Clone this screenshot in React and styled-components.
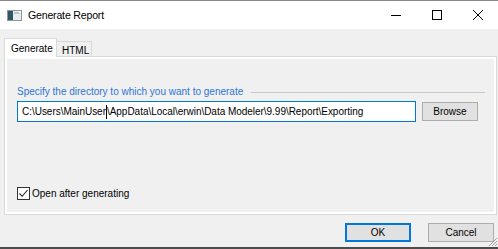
import React from 'react';
import styled, { createGlobalStyle } from 'styled-components';

const GlobalStyle = createGlobalStyle`
    html, body {
        margin: 0;
        padding: 0;
        background: #f0f0f0;
    }
    * {
        box-sizing: border-box;
    }
`;

const Window = styled.div`
    width: 498px;
    height: 249px;
    display: flex;
    flex-direction: column;
    position: relative;
    background: #f0f0f0;
    border-top: 1px solid #8a8a8a;
    border-bottom: 2px solid #4c4c4c;
    font-family: 'Liberation Sans', Arial, sans-serif;
    font-size: 10px;
    color: #000;
    overflow: hidden;
`;

const TitleBar = styled.div`
    height: 28px;
    flex: none;
    display: flex;
    align-items: center;
    background: #fff;
    padding-left: 7px;
`;

const TitleText = styled.span`
    margin-left: 6px;
    font-size: 10.5px;
    letter-spacing: -0.15px;
    flex: 1;
`;

const CaptionButton = styled.div`
    width: 41px;
    height: 28px;
    display: flex;
    align-items: center;
    justify-content: center;
`;

const Body = styled.div`
    flex: 1;
    display: flex;
    flex-direction: column;
    padding: 9px 1px 0 4px;
`;

const TabStrip = styled.div`
    display: flex;
    align-items: flex-end;
    height: 19px;
    position: relative;
    z-index: 1;
    margin-bottom: -1px;
`;

const Tab = styled.div`
    height: ${(p) => (p.$active ? '19px' : '16px')};
    padding: ${(p) => (p.$active ? '3px 6px 0 6px' : '2px 5px 0 5px')};
    width: ${(p) => (p.$active ? '53px' : '35px')};
    background: ${(p) => (p.$active ? '#fff' : '#f0f0f0')};
    border: 1px solid #d9d9d9;
    border-bottom: ${(p) => (p.$active ? 'none' : '1px solid #d9d9d9')};
    border-left: ${(p) => (p.$active ? '1px solid #d9d9d9' : 'none')};
    line-height: 13px;
    white-space: nowrap;
`;

const TabPanel = styled.div`
    height: 159px;
    border: 1px solid #d9d9d9;
    background: #fff;
    padding: 2px;
`;

const TabPage = styled.div`
    height: 100%;
    background: #f0f0f0;
    display: flex;
    flex-direction: column;
    padding: 26px 9px 12px 10px;
`;

const GroupHeader = styled.div`
    display: flex;
    align-items: center;
    color: #2e75d6;
    line-height: 13px;
    height: 13px;
    white-space: nowrap;
`;

const GroupLine = styled.div`
    flex: 1;
    height: 1px;
    background: #c8c8c8;
    margin-left: 8px;
    margin-top: 1px;
`;

const PathRow = styled.div`
    display: flex;
    align-items: center;
    margin-top: 3px;
    gap: 6px;
`;

const PathField = styled.div`
    width: 399px;
    height: 21px;
    background: #fff;
    border: 1px solid #0078d7;
    padding-left: 4px;
    display: flex;
    align-items: center;
    white-space: nowrap;
    overflow: hidden;
    letter-spacing: -0.03px;
`;

const Caret = styled.span`
    display: inline-block;
    width: 1px;
    height: 14px;
    background: #000;
`;

const Button = styled.div`
    width: ${(p) => p.$width || 56}px;
    height: 19px;
    display: flex;
    align-items: center;
    justify-content: center;
    background: #e1e1e1;
    border: ${(p) => (p.$default ? '2px solid #0078d7' : '1px solid #adadad')};
`;

const CheckRow = styled.div`
    margin-top: auto;
    display: flex;
    align-items: center;
    gap: 2px;
`;

const CheckBox = styled.div`
    width: 13px;
    height: 13px;
    border: 1px solid #333;
    background: #fff;
    display: flex;
    align-items: center;
    justify-content: center;
`;

const Footer = styled.div`
    flex: 1;
    display: flex;
    justify-content: flex-end;
    align-items: flex-start;
    gap: 17px;
    padding: 8px 3px 0 0;
`;

const Grip = styled.svg`
    position: absolute;
    right: 0;
    bottom: 0;
`;

function AppIcon() {
    return (
        <svg width="15" height="11" viewBox="0 0 15 11">
            <rect x="0.5" y="0.5" width="14" height="10" fill="#e8ecef" stroke="#8d979e" />
            <rect x="1" y="1" width="5" height="9" fill="#2f5566" />
            <rect x="7" y="2" width="6" height="2" fill="#b9c7d0" />
            <rect x="12" y="1" width="2" height="2" fill="#ffffff" />
        </svg>
    );
}

export default function App() {
    return (
        <>
            <GlobalStyle />
            <Window>
                <TitleBar>
                    <AppIcon />
                    <TitleText>Generate Report</TitleText>
                    <CaptionButton>
                        <svg width="10" height="10" viewBox="0 0 10 10">
                            <line x1="0" y1="5.5" x2="10" y2="5.5" stroke="#000" strokeWidth="1" />
                        </svg>
                    </CaptionButton>
                    <CaptionButton>
                        <svg width="10" height="10" viewBox="0 0 10 10">
                            <rect x="0.5" y="0.5" width="9" height="9" fill="none" stroke="#000" strokeWidth="1" />
                        </svg>
                    </CaptionButton>
                    <CaptionButton>
                        <svg width="10" height="10" viewBox="0 0 10 10">
                            <path d="M0 0 L10 10 M10 0 L0 10" stroke="#000" strokeWidth="1" />
                        </svg>
                    </CaptionButton>
                </TitleBar>
                <Body>
                    <TabStrip>
                        <Tab $active>Generate</Tab>
                        <Tab>HTML</Tab>
                    </TabStrip>
                    <TabPanel>
                        <TabPage>
                            <GroupHeader>
                                Specify the directory to which you want to generate
                                <GroupLine />
                            </GroupHeader>
                            <PathRow>
                                <PathField>
                                    <span>C:\Users\MainUser</span>
                                    <Caret />
                                    <span>\AppData\Local\erwin\Data Modeler\9.99\Report\Exporting</span>
                                </PathField>
                                <Button $width={56}>Browse</Button>
                            </PathRow>
                            <CheckRow>
                                <CheckBox>
                                    <svg width="11" height="11" viewBox="0 0 11 11">
                                        <path d="M1.5 5.5 L4.2 8.3 L9.5 2" fill="none" stroke="#222" strokeWidth="1.1" />
                                    </svg>
                                </CheckBox>
                                <span>Open after generating</span>
                            </CheckRow>
                        </TabPage>
                    </TabPanel>
                    <Footer>
                        <Button $width={66} $default>OK</Button>
                        <Button $width={66}>Cancel</Button>
                    </Footer>
                </Body>
                <Grip width="11" height="11" viewBox="0 0 11 11">
                    <path d="M10 2 L2 10 M10 5 L5 10 M10 8 L8 10" stroke="#a0a0a0" strokeWidth="1" />
                </Grip>
            </Window>
        </>
    );
}
